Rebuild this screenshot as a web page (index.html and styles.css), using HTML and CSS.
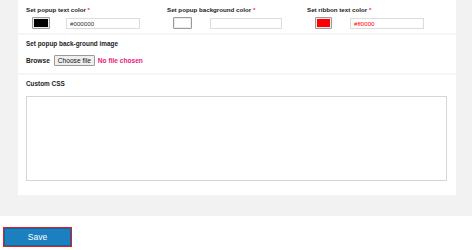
FILE: index.html
```html
<!DOCTYPE html>
<html lang="en">
<head>
    <meta charset="UTF-8">
    <title>Popup Settings</title>
    <link rel="stylesheet" href="styles.css">
</head>
<body>
    <div class="settings-panel">
        <div class="settings-card color-row">
            <div class="color-field">
                <label>Set popup text color <span class="req">*</span></label>
                <div class="color-inputs">
                    <span class="swatch"><span class="swatch-fill" style="background:#000000"></span></span>
                    <input type="text" class="hex-input" value="#000000">
                </div>
            </div>
            <div class="color-field">
                <label>Set popup background color <span class="req">*</span></label>
                <div class="color-inputs">
                    <span class="swatch"><span class="swatch-fill" style="background:#ffffff"></span></span>
                    <input type="text" class="hex-input" value="">
                </div>
            </div>
            <div class="color-field">
                <label>Set ribbon text color <span class="req">*</span></label>
                <div class="color-inputs">
                    <span class="swatch"><span class="swatch-fill" style="background:#ff0000"></span></span>
                    <input type="text" class="hex-input red" value="#ff0000">
                </div>
            </div>
        </div>

        <div class="settings-card image-row">
            <div class="field-title">Set popup back-ground image</div>
            <div class="browse-line">
                <span class="browse-label">Browse</span>
                <span class="file-btn">Choose file</span>
                <span class="file-status">No file chosen</span>
            </div>
        </div>

        <div class="settings-card css-row">
            <div class="field-title">Custom CSS</div>
            <textarea class="css-box"></textarea>
        </div>
    </div>

    <div class="actions">
        <button class="save-btn">Save</button>
    </div>
</body>
</html>
```

FILE: styles.css
```css
* {
    margin: 0;
    padding: 0;
    box-sizing: border-box;
    font-family: 'Liberation Sans', Arial, sans-serif;
}

body {
    background-color: #ffffff;
    color: #222;
}

.settings-panel {
    width: 472px;
    height: 216px;
    background-color: #f2f2f2;
    padding: 0 16px 0 18px;
}

.settings-card {
    background-color: #ffffff;
    border-bottom: 2px solid #f6f6f6;
}

.color-row {
    height: 35px;
    display: grid;
    grid-template-columns: 141px 140px 140px;
    padding: 6px 0 0 8px;
}

.color-field label {
    display: block;
    font-size: 6.2px;
    font-weight: bold;
    line-height: 8px;
    color: #222;
}

.req {
    color: #e33;
}

.color-inputs {
    display: flex;
    align-items: center;
    margin-top: 3px;
    padding-left: 6px;
}

.color-field:nth-child(3) .color-inputs {
    padding-left: 8px;
}

.swatch {
    display: block;
    width: 18px;
    height: 12px;
    background-color: #ececec;
    border: 1px solid #9a9a9a;
    border-radius: 1px;
    padding: 1px;
}

.color-field:nth-child(2) .swatch {
    width: 19px;
}

.color-field:nth-child(3) .swatch {
    width: 17px;
}

.swatch-fill {
    display: block;
    width: 100%;
    height: 100%;
}

.hex-input {
    margin-left: 16px;
    width: 74px;
    height: 11px;
    border: 1px solid #dcdcdc;
    font-size: 6.2px;
    padding: 0 3px;
    color: #333;
    outline: none;
}

.color-field:nth-child(2) .hex-input {
    margin-left: 18px;
    width: 72px;
}

.color-field:nth-child(3) .hex-input {
    margin-left: 18px;
}

.hex-input.red {
    color: #ff0000;
}

.image-row {
    height: 40px;
    padding: 5px 0 0 8px;
}

.field-title {
    font-size: 6.4px;
    font-weight: bold;
    line-height: 8px;
    color: #222;
}

.browse-line {
    display: flex;
    align-items: center;
    margin-top: 7px;
    font-size: 6.6px;
}

.browse-label {
    font-weight: bold;
    color: #222;
}

.file-btn {
    margin-left: 4px;
    padding: 1px 3px;
    background-color: #efefef;
    border: 1px solid #9a9a9a;
    border-radius: 1px;
    font-size: 6.6px;
    line-height: 7px;
    color: #111;
}

.file-status {
    margin-left: 3px;
    color: #e8197b;
    font-weight: bold;
}

.css-row {
    height: 120px;
    padding: 5px 8px 0 8px;
    border-bottom: none;
}

.css-box {
    display: block;
    margin-top: 8px;
    width: 421px;
    height: 85px;
    border: 1px solid #d6d6d6;
    resize: none;
    outline: none;
}

.actions {
    padding: 11px 0 0 3px;
}

.save-btn {
    display: block;
    width: 69px;
    height: 20px;
    background-color: #1b7fc0;
    border: 1px solid #dc1f2a;
    box-shadow: inset 0 0 0 1px #14659c;
    color: #ffffff;
    font-size: 8.5px;
    cursor: pointer;
}
```
